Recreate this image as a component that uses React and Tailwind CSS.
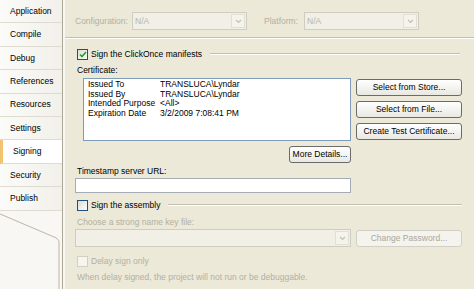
import React from 'react';

const tabs = ['Application', 'Compile', 'Debug', 'References', 'Resources', 'Settings', 'Signing', 'Security', 'Publish'];

const Check = ({ checked, disabled }) => (
  <span
    className={`w-[11px] h-[11px] shrink-0 flex items-center justify-center border ${
      disabled ? 'border-[#d2d0c4] bg-[#f6f5f0]' : 'border-[#1c5180] bg-gradient-to-br from-[#dcdcd5] to-white'
    }`}
  >
    {checked && (
      <svg width="8" height="7" viewBox="0 0 8 7">
        <path d="M1 3.5 L3 5.5 L7 1" stroke="#21a121" strokeWidth="1.6" fill="none" />
      </svg>
    )}
  </span>
);

const Combo = ({ w, value }) => (
  <div className={`${w} h-[18px] flex border border-[#cfcdc0] bg-[#f1efe6]`}>
    <span className="flex-1 pl-[2px] text-[#b8b5a6] leading-[16px]">{value}</span>
    <span className="w-[14px] m-px flex items-center justify-center border border-[#e2e0d6] bg-[#f4f3ec]">
      <svg width="7" height="5" viewBox="0 0 7 5">
        <path d="M1 1 L3.5 3.5 L6 1" stroke="#c3c1b4" strokeWidth="1.2" fill="none" />
      </svg>
    </span>
  </div>
);

const Btn = ({ children, className = '', disabled }) => (
  <button
    className={`h-[17px] rounded-[3px] border leading-none ${
      disabled
        ? 'border-[#d2d0c4] bg-[#f4f3ee] text-[#aca899]'
        : 'border-[#6b6b6b] bg-gradient-to-b from-white to-[#e9e8e2] text-black'
    } ${className}`}
  >
    {children}
  </button>
);

const Etched = ({ className = '' }) => (
  <div className={`h-[2px] border-t border-[#c2bfb1] border-b border-b-white ${className}`} />
);

export default function App() {
  return (
    <div
      className="w-[474px] h-[289px] flex overflow-hidden bg-[#ece9d8] text-[8.5px] text-black"
      style={{ fontFamily: '"Liberation Sans", Arial, sans-serif' }}
    >
      <aside className="w-[63px] shrink-0 flex flex-col bg-[#f8f7f3] border-r border-[#aca899]">
        {tabs.map((t) => (
          <div
            key={t}
            className={`h-[23.4px] shrink-0 flex items-center pl-[10px] border-b border-[#dedbd0] ${
              t === 'Signing' ? 'bg-white border-l-[3px] border-l-[#f2c46f] pl-[7px]' : 'bg-gradient-to-r from-[#fbfbf9] to-[#f1f0ea]'
            }`}
          >
            {t}
          </div>
        ))}
        <svg className="flex-1" width="62" viewBox="0 0 62 79" preserveAspectRatio="none">
          <path d="M0 3 L56 27 L59 30 L59 79" stroke="#b9b6a8" fill="none" strokeWidth="1" />
        </svg>
      </aside>
      <div className="w-[2px] shrink-0 bg-[#f7f6f1]" />
      <main className="flex-1 flex flex-col">
        <div className="mt-[12px] h-[18px] flex items-center text-[#b3b0a1]">
          <span className="ml-[10px] w-[57px]">Configuration:</span>
          <Combo w="w-[115px]" value="N/A" />
          <span className="ml-[17px] w-[40px]">Platform:</span>
          <Combo w="w-[115px]" value="N/A" />
        </div>
        <Etched className="mt-[7px]" />
        <div className="mt-[9px] h-[12px] flex items-center pl-[12px] pr-[14px]">
          <Check checked />
          <span className="ml-[3px]">Sign the ClickOnce manifests</span>
          <Etched className="flex-1 ml-[8px]" />
        </div>
        <div className="mt-[4px] pl-[12px] h-[12px] leading-[12px]">Certificate:</div>
        <div className="mt-[2px] flex pl-[18px]">
          <div className="w-[268px] h-[63px] border border-[#7f9db9] bg-white pl-[4px] pt-[1px]">
            {[
              ['Issued To', 'TRANSLUCA\\Lyndar'],
              ['Issued By', 'TRANSLUCA\\Lyndar'],
              ['Intended Purpose', '<All>'],
              ['Expiration Date', '3/2/2009 7:08:41 PM'],
            ].map(([k, v]) => (
              <div key={k} className="flex h-[9.6px] leading-[9.6px]">
                <span className="w-[72px]">{k}</span>
                <span>{v}</span>
              </div>
            ))}
          </div>
          <div className="ml-[5px] w-[106px] flex flex-col gap-[5px] pt-px">
            <Btn>Select from Store...</Btn>
            <Btn>Select from File...</Btn>
            <Btn>Create Test Certificate...</Btn>
          </div>
        </div>
        <div className="mt-[5px] w-[286px] flex justify-end">
          <Btn className="w-[62px]">More Details...</Btn>
        </div>
        <div className="mt-[2px] pl-[12px] h-[12px] leading-[12px]">Timestamp server URL:</div>
        <div className="mt-[1px] pl-[10px]">
          <div className="w-[276px] h-[15px] border border-[#a5acb5] bg-white" />
        </div>
        <div className="mt-[6px] h-[12px] flex items-center pl-[12px] pr-[12px]">
          <Check />
          <span className="ml-[3px]">Sign the assembly</span>
          <Etched className="flex-1 ml-[8px]" />
        </div>
        <div className="mt-[5px] pl-[12px] h-[12px] leading-[12px] text-[#b3b0a1]">Choose a strong name key file:</div>
        <div className="mt-[1px] pl-[10px] flex items-center">
          <Combo w="w-[276px] h-[16px]" value="" />
          <Btn disabled className="ml-[5px] w-[106px] h-[16px]">Change Password...</Btn>
        </div>
        <div className="mt-[8px] h-[12px] flex items-center pl-[12px] text-[#b3b0a1]">
          <Check disabled />
          <span className="ml-[3px]">Delay sign only</span>
        </div>
        <div className="mt-[4px] pl-[12px] h-[12px] leading-[12px] text-[#b3b0a1]">
          When delay signed, the project will not run or be debuggable.
        </div>
      </main>
    </div>
  );
}
